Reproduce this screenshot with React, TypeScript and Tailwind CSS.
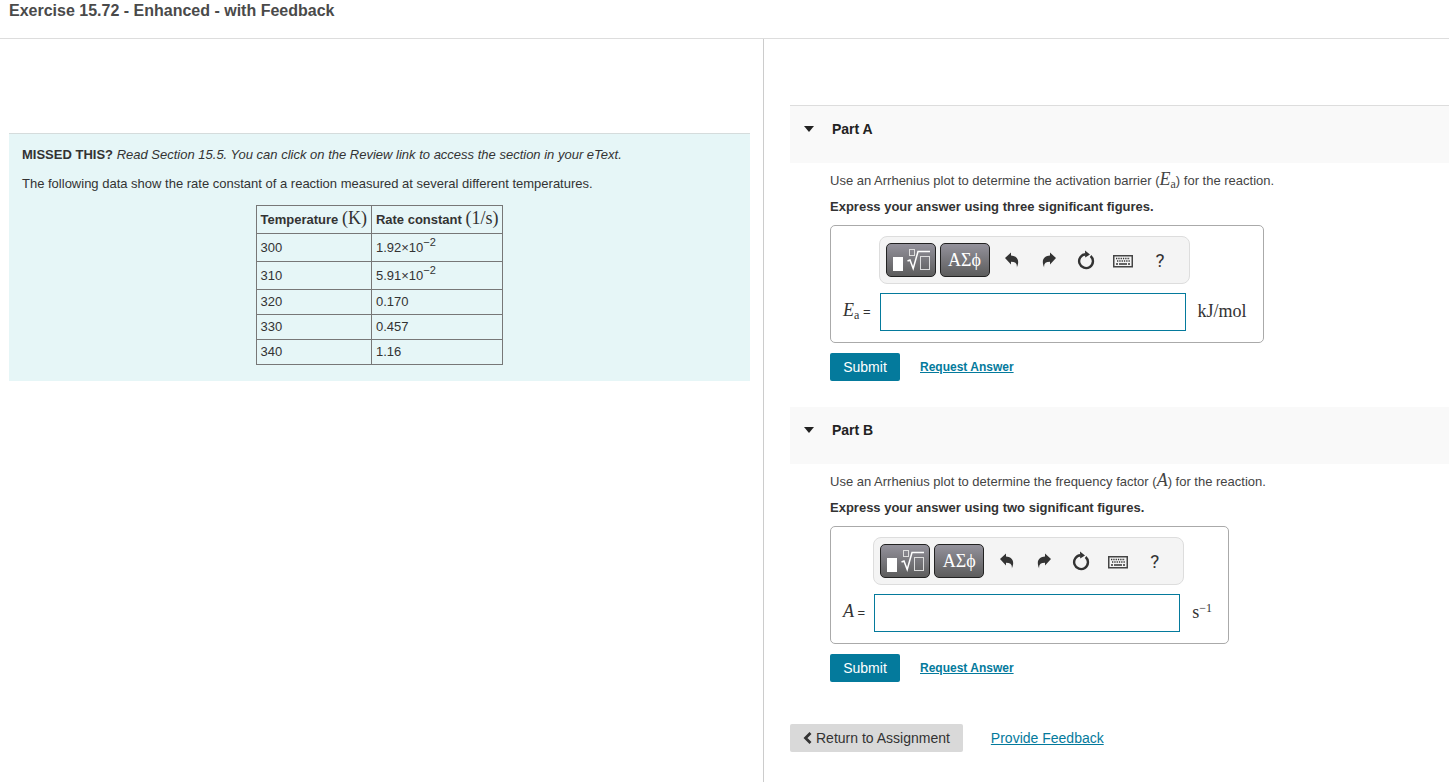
import { useId, type ReactNode } from 'react';

const MATH = "font-['Liberation_Serif',serif] text-[18px] leading-none";

function TemplatesIcon() {
  return (
    <svg width="38" height="26" viewBox="0 0 38 26" fill="none" stroke="#fff" aria-hidden="true">
      <rect x="1" y="10" width="10" height="14" fill="#fff" stroke="none" />
      <rect x="17.500" y="2.500" width="5" height="6" stroke="#ddd" />
      <path d="M15.500 14l2.500-1 3.200 8.500L26 4.500H38" strokeWidth="1.500" />
      <rect x="28.500" y="9.500" width="9" height="13" stroke="#ddd" />
    </svg>
  );
}

function UndoIcon() {
  return (
    <svg width="16" height="16" viewBox="0 0 16 16" fill="#333" aria-hidden="true">
      <path d="M1 6 7 .6v2.900c5.400.2 9.400 4.200 5.800 12 .6-3.800-1.300-5.700-5.800-5.700v2.700Z" />
    </svg>
  );
}

function RedoIcon() {
  return (
    <svg width="16" height="16" viewBox="0 0 16 16" fill="#333" aria-hidden="true">
      <path d="M15 6 9 .6v2.900C3.600 3.700-.4 7.700 3.200 15.500 2.600 11.700 4.500 9.800 9 9.800v2.700Z" />
    </svg>
  );
}

function ResetIcon() {
  return (
    <svg width="18" height="20" viewBox="0 0 18 20" aria-hidden="true">
      <path d="M13.600 6A6.900 6.900 0 1 1 8.500 4.300" fill="none" stroke="#333" strokeWidth="2.400" />
      <path d="M8 .6 13 4.400 8.200 7.600Z" fill="#333" />
    </svg>
  );
}

function KeyboardIcon() {
  return (
    <svg width="20" height="16" viewBox="0 0 20 16" aria-hidden="true">
      <rect x=".75" y="3.750" width="18.500" height="11" fill="#f4f4f4" stroke="#444" strokeWidth="1.500" />
      <path d="M3 6.500h14M4 9h13" stroke="#333" strokeWidth="1.500" strokeDasharray="1.300 1" />
      <path d="M3 12h2M6 12h8M15 12h2" stroke="#333" strokeWidth="1.700" />
    </svg>
  );
}

function ToolButton({ label, children }: { label: string; children: ReactNode }) {
  return (
    <button type="button" aria-label={label} className="flex h-[34px] w-[37px] items-center justify-center text-[#333]">
      {children}
    </button>
  );
}

const DARK_BUTTON =
  'flex h-[34px] w-[50px] items-center justify-center rounded-[5px] border border-[#222] bg-linear-to-b from-[#94929c] to-[#5d5d5d] text-white';

function Toolbar() {
  return (
    <div className="flex h-12 w-[311px] items-center rounded-lg border border-[#ddd] bg-[#f4f4f4] pl-1.5">
      <button type="button" aria-label="Templates" className={DARK_BUTTON}>
        <TemplatesIcon />
      </button>
      <button
        type="button"
        aria-label="Symbols"
        className={`${DARK_BUTTON} mr-1 ml-1 font-['Liberation_Serif',serif] text-[18px]`}
      >
        ΑΣϕ
      </button>
      <ToolButton label="Undo"><UndoIcon /></ToolButton>
      <ToolButton label="Redo"><RedoIcon /></ToolButton>
      <ToolButton label="Reset"><ResetIcon /></ToolButton>
      <ToolButton label="Keyboard shortcuts"><KeyboardIcon /></ToolButton>
      <ToolButton label="Help"><span className="font-[Roboto,sans-serif] text-[19px] leading-none">?</span></ToolButton>
    </div>
  );
}

type PartProps = { title: string; question: ReactNode; instruction: string; symbol: ReactNode; unit: ReactNode };

function Part({ title, question, instruction, symbol, unit }: PartProps) {
  const id = useId();
  return (
    <section className="mb-[26px]">
      <h2 className="bg-[#f9f9f9]">
        <button type="button" aria-expanded="true" className="flex h-[57px] w-full items-start pt-[13px] pl-3.5 text-sm font-bold text-[#222]">
          <svg width="10" height="6" viewBox="0 0 10 6" className="mt-[7px] mr-[18px]" fill="#222" aria-hidden="true">
            <path d="M0 0h10L5 6Z" />
          </svg>
          {title}
        </button>
      </h2>
      <div className="pl-10">
        <p className="h-[34px] pt-[7px] text-[13px] leading-5">{question}</p>
        <p className="h-7 text-[13px] leading-5 font-bold text-[#333]">{instruction}</p>
        <div className="grid h-[118px] w-fit grid-cols-[auto_auto_auto] items-center gap-x-2 rounded-[5px] border border-[#aaa] pt-2.5 pr-4 pb-[11px] pl-3">
          <div className="col-start-2 self-start"><Toolbar /></div>
          <label htmlFor={id} className="col-start-1 row-start-2 pt-0.5 text-[13px] whitespace-nowrap text-[#333]">
            {symbol} =
          </label>
          <input id={id} type="text" className="col-start-2 row-start-2 ml-px h-[38px] w-[306px] self-end border border-[#047a9c] px-2 outline-none" />
          <span className={`${MATH} col-start-3 row-start-2 pt-0.5 text-[#333]`}>{unit}</span>
        </div>
        <div className="mt-2.5 flex items-center gap-5">
          <button type="button" className="h-7 w-[70px] rounded-[2px] bg-[#047a9c] text-sm text-white">Submit</button>
          <a href="#answer" className="text-xs font-bold text-[#047a9c] underline">Request Answer</a>
        </div>
      </div>
    </section>
  );
}

const ROWS: { temperature: string; mantissa: string; exponent?: string }[] = [
  { temperature: '300', mantissa: '1.92', exponent: '−2' },
  { temperature: '310', mantissa: '5.91', exponent: '−2' },
  { temperature: '320', mantissa: '0.170' },
  { temperature: '330', mantissa: '0.457' },
  { temperature: '340', mantissa: '1.16' },
];

const CELL = 'border border-[#777] px-1';

export default function App() {
  const activationEnergy = (
    <span className={MATH}>
      <i>E</i>
      <sub className="text-[12px]">a</sub>
    </span>
  );
  const factor = <i className={MATH}>A</i>;

  return (
    <div className="flex min-h-screen flex-col bg-white font-['Liberation_Sans',Arial,sans-serif] text-[#444]">
      <header className="h-[39px] border-b border-[#ddd] pt-px pl-[9px]">
        <h1 className="text-base leading-5 font-bold text-[#4a4a4a]">Exercise 15.72 - Enhanced - with Feedback</h1>
      </header>
      <div className="grid grow grid-cols-[764fr_685fr]">
        <main className="border-r border-[#ccc] pt-[94px] pr-[13px] pl-[9px]">
          <div className="border-t border-[#d5dcdc] bg-[#e6f6f7] px-[13px] pt-[11px] pb-4 text-[13px] leading-5 text-[#333]">
            <p className="mb-[9px]">
              <strong>MISSED THIS?</strong> <em>Read Section 15.5. You can click on the Review link to access the section in your eText.</em>
            </p>
            <p className="mb-[11px]">The following data show the rate constant of a reaction measured at several different temperatures.</p>
            <table className="mx-auto border-collapse text-left text-[13px] leading-5">
              <thead>
                <tr className="h-7">
                  <th className={CELL}>Temperature <span className={`${MATH} font-normal`}>(K)</span></th>
                  <th className={CELL}>Rate constant <span className={`${MATH} font-normal`}>(1/s)</span></th>
                </tr>
              </thead>
              <tbody>
                {ROWS.map((row) => (
                  <tr key={row.temperature} className={row.exponent ? 'h-7' : 'h-[25px]'}>
                    <td className={CELL}>{row.temperature}</td>
                    <td className={CELL}>
                      {row.mantissa}
                      {row.exponent && <>×10<sup className="text-[11px]">{row.exponent}</sup></>}
                    </td>
                  </tr>
                ))}
              </tbody>
            </table>
          </div>
        </main>
        <aside className="pt-[66px] pl-[26px]">
          <div className="border-t border-[#ddd]">
            <Part
              title="Part A"
              question={<>Use an Arrhenius plot to determine the activation barrier ({activationEnergy}) for the reaction.</>}
              instruction="Express your answer using three significant figures."
              symbol={activationEnergy}
              unit="kJ/mol"
            />
            <Part
              title="Part B"
              question={<>Use an Arrhenius plot to determine the frequency factor ({factor}) for the reaction.</>}
              instruction="Express your answer using two significant figures."
              symbol={factor}
              unit={<>s<sup className="text-[12px]">−1</sup></>}
            />
          </div>
          <nav className="mt-[42px] flex items-center gap-7 text-sm">
            <button type="button" className="flex h-7 items-center gap-1 rounded-[2px] bg-[#d9d9d9] px-[13px] text-[#333]">
              <svg width="9" height="12" viewBox="0 0 9 12" fill="none" stroke="#333" strokeWidth="2.800" aria-hidden="true">
                <path d="M7.500 1 2.500 6l5 5" />
              </svg>
              Return to Assignment
            </button>
            <a href="#feedback" className="text-[#047a9c] underline">Provide Feedback</a>
          </nav>
        </aside>
      </div>
    </div>
  );
}
